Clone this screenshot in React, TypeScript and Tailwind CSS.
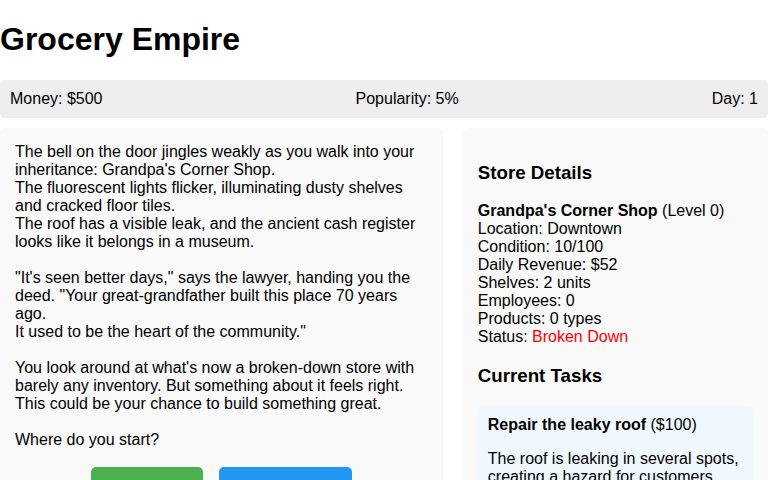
import React from 'react';

const storeLines = [
  'Location: Downtown',
  'Condition: 10/100',
  'Daily Revenue: $52',
  'Shelves: 2 units',
  'Employees: 0',
  'Products: 0 types',
];

export default function App() {
  return (
    <div className="min-h-screen bg-white text-black text-base leading-[normal] font-['Liberation_Sans',Arial,sans-serif]">
      <h1 className="text-[32px] font-bold my-[21.44px]">Grocery Empire</h1>

      {/* Stats bar */}
      <div className="flex justify-between bg-[#eee] p-[10px] rounded-[5px] mb-[10px]">
        <span>Money: $500</span>
        <span>Popularity: 5%</span>
        <span>Day: 1</span>
      </div>

      <div className="flex gap-5 items-start">
        {/* Story */}
        <div className="flex-[3] bg-[#f9f9f9] p-[15px] rounded-[5px]">
          <div>
            The bell on the door jingles weakly as you walk into your inheritance: Grandpa's Corner Shop.
            <br />
            The fluorescent lights flicker, illuminating dusty shelves and cracked floor tiles.
            <br />
            The roof has a visible leak, and the ancient cash register looks like it belongs in a museum.
            <br />
            <br />
            "It's seen better days," says the lawyer, handing you the deed. "Your great-grandfather built this place 70 years ago.
            <br />
            It used to be the heart of the community."
            <br />
            <br />
            You look around at what's now a broken-down store with barely any inventory. But something about it feels right.
            <br />
            This could be your chance to build something great.
            <br />
            <br />
            Where do you start?
          </div>
          <div className="flex justify-center gap-4 mt-[18px]">
            <button className="w-[112px] py-3 rounded-[5px] bg-[#4CAF50] text-white">Clean Up</button>
            <button className="w-[133px] py-3 rounded-[5px] bg-[#2196F3] text-white">Check Finances</button>
          </div>
        </div>

        {/* Store details */}
        <div className="flex-[2] bg-[#f9f9f9] p-[15px] rounded-[5px]">
          <h3 className="text-[18.72px] font-bold my-[18.72px]">Store Details</h3>
          <div>
            <div>
              <strong>Grandpa's Corner Shop</strong> (Level 0)
            </div>
            {storeLines.map((line) => (
              <div key={line}>{line}</div>
            ))}
            <div>
              Status: <span className="text-[red]">Broken Down</span>
            </div>
          </div>

          <h3 className="text-[18.72px] font-bold my-[18.72px]">Current Tasks</h3>
          <div className="bg-[#f0f8ff] p-[10px] rounded-[5px] mb-[10px]">
            <div>
              <strong>Repair the leaky roof</strong> ($100)
            </div>
            <p className="my-4">The roof is leaking in several spots, creating a hazard for customers.</p>
            <button className="px-5 py-3 rounded-[5px] bg-[#4CAF50] text-white">Repair</button>
          </div>
        </div>
      </div>
    </div>
  );
}
